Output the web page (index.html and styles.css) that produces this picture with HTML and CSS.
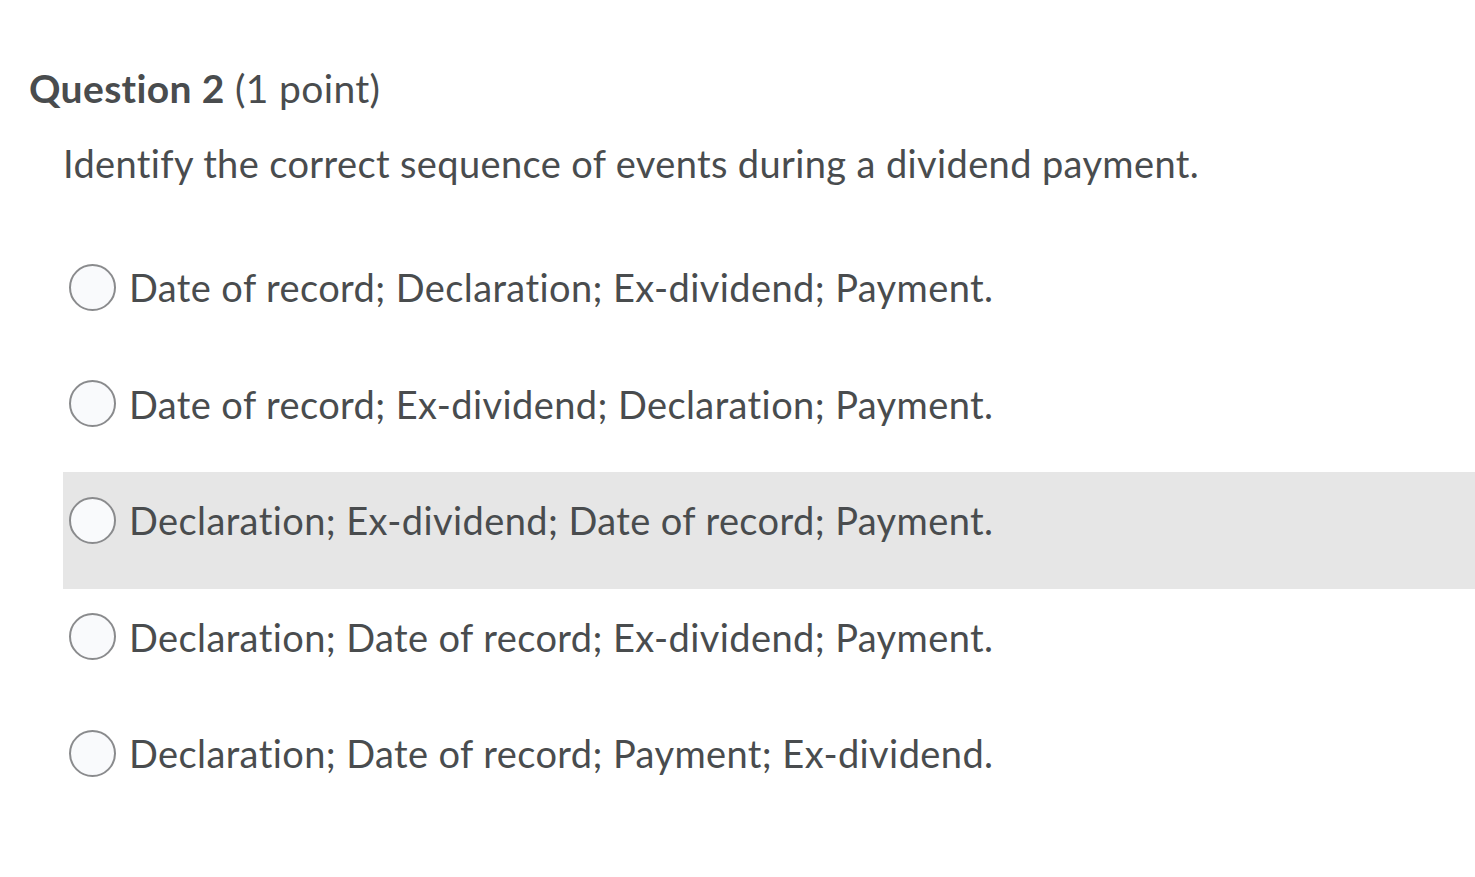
FILE: index.html
```html
<!DOCTYPE html>
<html>
<head>
<meta charset="utf-8">
<link rel="stylesheet" href="styles.css">
</head>
<body>
<div class="page">
  <h2 class="title"><span class="qnum">Question 2</span> <span class="pts">(1 point)</span></h2>
  <div class="body">
    <p class="prompt">Identify the correct sequence of events during a dividend payment.</p>
    <div class="options">
      <label class="opt"><span class="radio"></span><span class="txt">Date of record; Declaration; Ex-dividend; Payment.</span></label>
      <label class="opt"><span class="radio"></span><span class="txt">Date of record; Ex-dividend; Declaration; Payment.</span></label>
      <label class="opt hover"><span class="radio"></span><span class="txt">Declaration; Ex-dividend; Date of record; Payment.</span></label>
      <label class="opt"><span class="radio"></span><span class="txt">Declaration; Date of record; Ex-dividend; Payment.</span></label>
      <label class="opt"><span class="radio"></span><span class="txt">Declaration; Date of record; Payment; Ex-dividend.</span></label>
    </div>
  </div>
</div>
</body>
</html>
```
FILE: styles.css
```css
html, body { margin: 0; padding: 0; background: #fff; }
body { font-family: Lato, "Open Sans", sans-serif; color: #494c4e; }
.page { padding: 62px 0 0 29px; }
.title { margin: 0; font-size: 39px; letter-spacing: 0.35px; line-height: 52px; font-weight: 400; }
.qnum { font-weight: 700; }
.body { padding-left: 34px; }
.prompt { margin: 23px 0 0 0; font-size: 38px; letter-spacing: 0.37px; line-height: 52px; }
.options { margin-top: 50px; }
.opt { display: flex; align-items: center; height: 116.5px; padding: 0 0 20px 6px; box-sizing: border-box; }
.opt.hover { background: #e6e6e6; }
.radio { width: 43px; height: 43px; border: 2px solid #8a8b8d; border-radius: 50%; background: #f9fafc; flex: none; }
.txt { margin-left: 13px; font-size: 38px; letter-spacing: 0.4px; line-height: 52px; }
```
